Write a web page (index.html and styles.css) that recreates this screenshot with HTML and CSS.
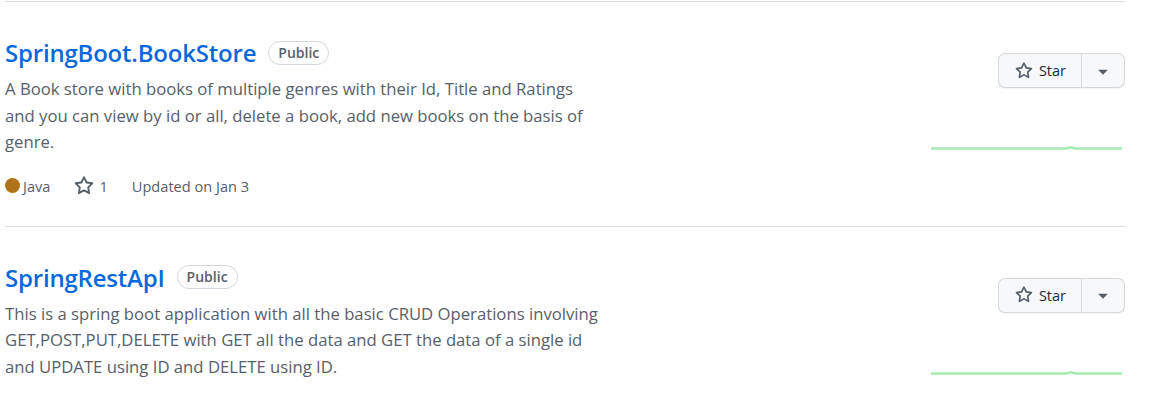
FILE: index.html
```html
<!DOCTYPE html>
<html lang="en">
<head>
<meta charset="utf-8">
<title>Repositories</title>
<link rel="stylesheet" href="styles.css">
</head>
<body>
<ul class="repo-list">
  <li class="repo">
    <div class="repo-main">
      <div class="repo-head">
        <a class="repo-name" href="#">SpringBoot.BookStore</a>
        <span class="badge">Public</span>
      </div>
      <p class="repo-desc">A Book store with books of multiple genres with their Id, Title and Ratings and you can view by id or all, delete a book, add new books on the basis of genre.</p>
      <div class="repo-meta">
        <span class="meta-item"><span class="lang-dot"></span>Java</span>
        <span class="meta-item">
          <svg class="meta-star" viewBox="0 0 16 16" width="20" height="20"><path d="M8 .25a.75.75 0 0 1 .673.418l1.882 3.815 4.21.612a.75.75 0 0 1 .416 1.279l-3.046 2.97.719 4.192a.751.751 0 0 1-1.088.791L8 12.347l-3.766 1.98a.75.75 0 0 1-1.088-.79l.72-4.194L.818 6.374a.75.75 0 0 1 .416-1.28l4.21-.611L7.327.668A.75.75 0 0 1 8 .25Zm0 2.445L6.615 5.5a.75.75 0 0 1-.564.41l-3.097.45 2.24 2.184a.75.75 0 0 1 .216.664l-.528 3.084 2.769-1.456a.75.75 0 0 1 .698 0l2.77 1.456-.53-3.084a.75.75 0 0 1 .216-.664l2.24-2.183-3.096-.45a.75.75 0 0 1-.564-.41L8 2.694Z"/></svg>1</span>
        <span class="meta-item">Updated on Jan 3</span>
      </div>
    </div>
    <div class="repo-side">
      <div class="star-btn">
        <button class="star-main">
          <svg viewBox="0 0 16 16" width="20" height="20"><path d="M8 .25a.75.75 0 0 1 .673.418l1.882 3.815 4.21.612a.75.75 0 0 1 .416 1.279l-3.046 2.97.719 4.192a.751.751 0 0 1-1.088.791L8 12.347l-3.766 1.98a.75.75 0 0 1-1.088-.79l.72-4.194L.818 6.374a.75.75 0 0 1 .416-1.28l4.21-.611L7.327.668A.75.75 0 0 1 8 .25Zm0 2.445L6.615 5.5a.75.75 0 0 1-.564.41l-3.097.45 2.24 2.184a.75.75 0 0 1 .216.664l-.528 3.084 2.769-1.456a.75.75 0 0 1 .698 0l2.77 1.456-.53-3.084a.75.75 0 0 1 .216-.664l2.24-2.183-3.096-.45a.75.75 0 0 1-.564-.41L8 2.694Z"/></svg>
          <span>Star</span>
        </button>
        <button class="star-drop">
          <svg viewBox="0 0 16 16" width="20" height="20"><path d="m4.427 7.427 3.396 3.396a.25.25 0 0 0 .354 0l3.396-3.396A.25.25 0 0 0 11.396 7H4.604a.25.25 0 0 0-.177.427Z"/></svg>
        </button>
      </div>
      <svg class="spark" viewBox="0 0 155 30" width="191" height="37" preserveAspectRatio="none"><path d="M0 28 L110 28 L113.5 27 L117 28 L155 28"/></svg>
    </div>
  </li>
  <li class="repo">
    <div class="repo-main">
      <div class="repo-head">
        <a class="repo-name" href="#">SpringRestApI</a>
        <span class="badge">Public</span>
      </div>
      <p class="repo-desc">This is a spring boot application with all the basic CRUD Operations involving GET,POST,PUT,DELETE with GET all the data and GET the data of a single id and UPDATE using ID and DELETE using ID.</p>
      <div class="repo-meta">
        <span class="meta-item"><span class="lang-dot"></span>Java</span>
        <span class="meta-item">Updated on Jan 3</span>
      </div>
    </div>
    <div class="repo-side">
      <div class="star-btn">
        <button class="star-main">
          <svg viewBox="0 0 16 16" width="20" height="20"><path d="M8 .25a.75.75 0 0 1 .673.418l1.882 3.815 4.21.612a.75.75 0 0 1 .416 1.279l-3.046 2.97.719 4.192a.751.751 0 0 1-1.088.791L8 12.347l-3.766 1.98a.75.75 0 0 1-1.088-.79l.72-4.194L.818 6.374a.75.75 0 0 1 .416-1.28l4.21-.611L7.327.668A.75.75 0 0 1 8 .25Zm0 2.445L6.615 5.5a.75.75 0 0 1-.564.41l-3.097.45 2.24 2.184a.75.75 0 0 1 .216.664l-.528 3.084 2.769-1.456a.75.75 0 0 1 .698 0l2.77 1.456-.53-3.084a.75.75 0 0 1 .216-.664l2.24-2.183-3.096-.45a.75.75 0 0 1-.564-.41L8 2.694Z"/></svg>
          <span>Star</span>
        </button>
        <button class="star-drop">
          <svg viewBox="0 0 16 16" width="20" height="20"><path d="m4.427 7.427 3.396 3.396a.25.25 0 0 0 .354 0l3.396-3.396A.25.25 0 0 0 11.396 7H4.604a.25.25 0 0 0-.177.427Z"/></svg>
        </button>
      </div>
      <svg class="spark" viewBox="0 0 155 30" width="191" height="37" preserveAspectRatio="none"><path d="M0 28 L110 28 L113.5 27 L117 28 L155 28"/></svg>
    </div>
  </li>
</ul>
</body>
</html>
```
FILE: styles.css
```css
html, body {
  margin: 0;
  padding: 0;
  background: #ffffff;
}
body {
  font-family: "Open Sans", "Noto Sans", "Liberation Sans", sans-serif;
  color: #1f2328;
  padding: 1px 0 0 5px;
}
.repo-list {
  list-style: none;
  margin: 0;
  padding: 0;
  width: 1120px;
  border-top: 1px solid #d8dee4;
}
.repo {
  display: flex;
  justify-content: space-between;
  padding: 30px 0 29px;
  border-bottom: 1px solid #d8dee4;
}
.repo-main {
  width: 840px;
}
.repo-head {
  display: flex;
  align-items: center;
  gap: 12px;
  margin-bottom: 5px;
  line-height: 37px;
  padding-top: 2px;
}
.repo-name {
  font-size: 24px;
  font-weight: 600;
  color: #0969da;
  text-decoration: none;
  letter-spacing: -0.2px;
}
.badge {
  display: inline-block;
  font-size: 14px;
  font-weight: 600;
  line-height: 22px;
  padding: 0 9px;
  color: #57606a;
  border: 1px solid #d0d7de;
  border-radius: 2em;
}
.repo-desc {
  margin: 0 0 10px;
  width: 602px;
  font-size: 16.7px;
  line-height: 26.5px;
  color: #57606a;
}
.repo-meta {
  margin-top: 19px;
  display: flex;
  align-items: center;
  font-size: 14.6px;
  line-height: 22px;
  color: #57606a;
}
.meta-item {
  display: inline-flex;
  align-items: center;
  margin-right: 24px;
}
.lang-dot {
  width: 15px;
  height: 15px;
  border-radius: 50%;
  background: #b07219;
  margin-right: 3px;
}
.meta-star {
  fill: #57606a;
  margin-right: 5px;
}
.repo-side {
  width: 200px;
  display: flex;
  flex-direction: column;
  align-items: flex-end;
  gap: 26px;
  padding-top: 21px;
}
.star-btn {
  display: flex;
  height: 35px;
  border: 1px solid rgba(31, 35, 40, 0.15);
  border-radius: 7px;
  background: #f6f8fa;
  box-shadow: 0 1px 0 rgba(31, 35, 40, 0.04);
  box-sizing: border-box;
}
.star-btn button {
  background: transparent;
  border: 0;
  margin: 0;
  display: flex;
  align-items: center;
  font-family: inherit;
  font-size: 14.5px;
  font-weight: 500;
  color: #24292f;
  cursor: pointer;
}
.star-main {
  padding: 0 15px 0 16px;
  gap: 6px;
  border-right: 1px solid rgba(31, 35, 40, 0.15) !important;
  width: 83px;
}
.star-main svg {
  fill: #57606a;
}
.star-drop {
  width: 42px;
  justify-content: center;
  padding: 0;
}
.star-drop svg {
  fill: #57606a;
}
.spark {
  display: block;
  margin-right: 3px;
}
.spark path {
  fill: none;
  stroke: #9be9a8;
  stroke-width: 2;
  opacity: 0.9;
}
```
